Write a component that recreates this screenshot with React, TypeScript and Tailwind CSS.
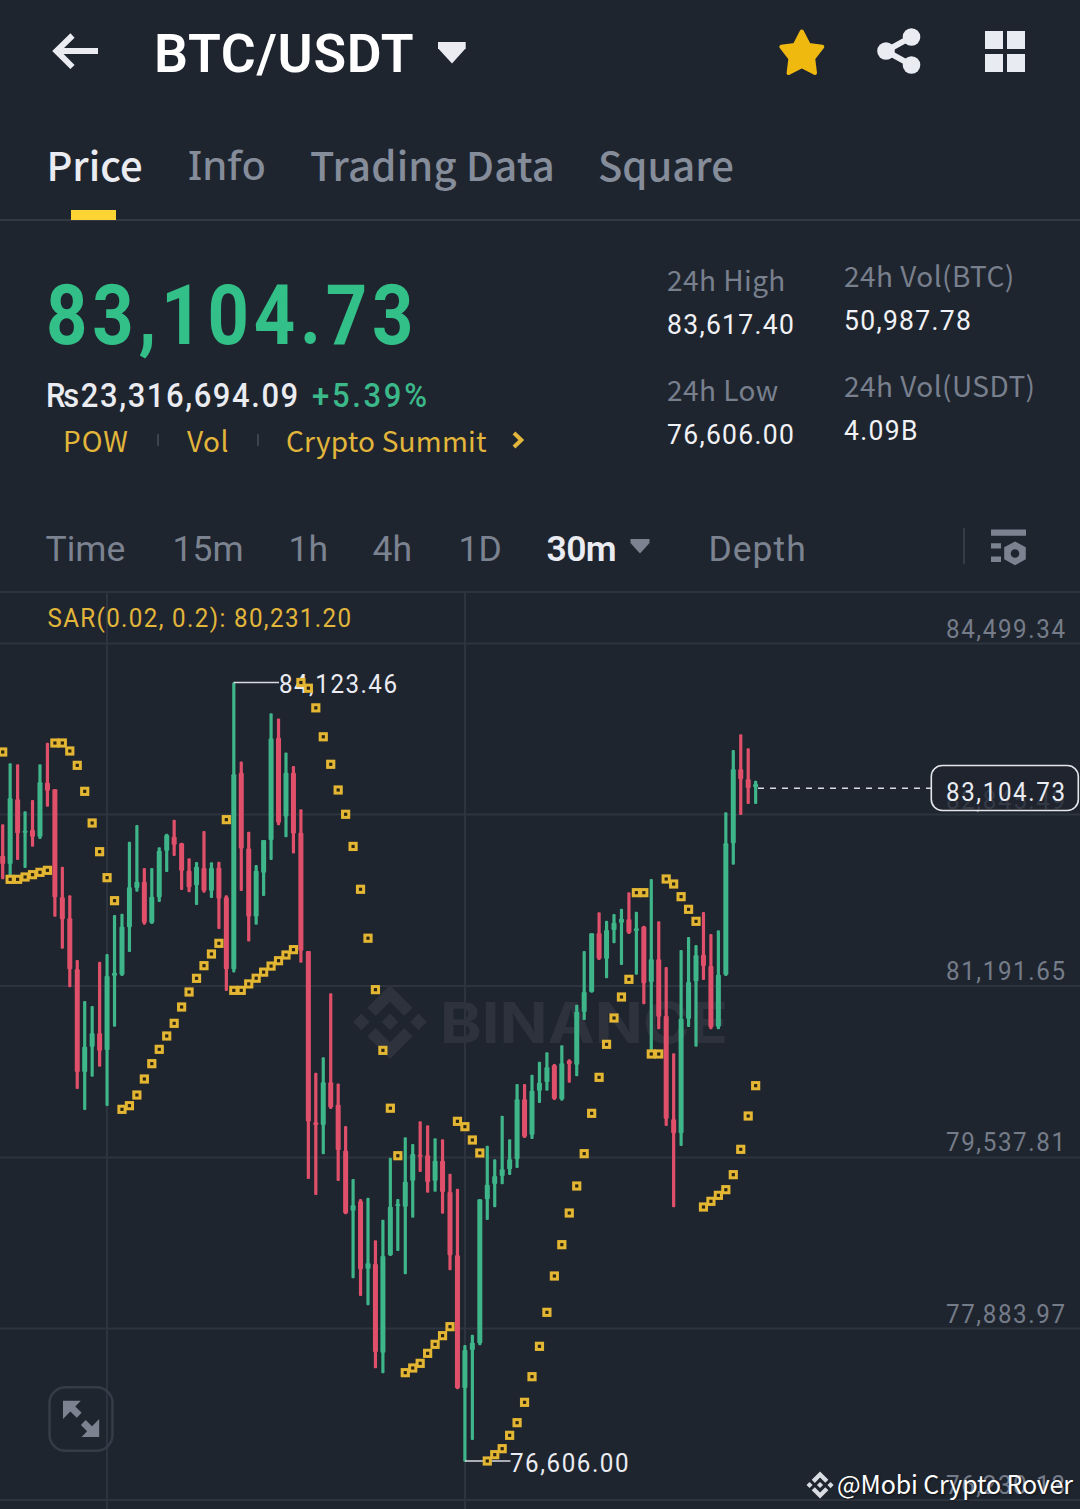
import type { ReactNode } from "react";

type Dir = "u" | "d";
// direction, high, body top, body bottom, low
type Candle = [Dir, number, number, number, number];

interface Segment<T> {
  origin: number;
  unit: number;
  start: number;
  rows: T[];
}

const CANDLES: Segment<Candle>[] = [
  {
    origin: 660,
    unit: 3,
    start: 0,
    rows: [
      ["d", 493, 587, 612, 658],
      ["u", 310, 415, 612, 650],
      ["d", 313, 418, 520, 600],
      ["u", 454, 512, 518, 624],
      ["d", 420, 510, 530, 560],
      ["u", 313, 367, 530, 537],
      ["d", 248, 368, 392, 440],
      ["d", 388, 388, 712, 770],
      ["d", 620, 712, 778, 866],
      ["d", 706, 775, 928, 982],
      ["d", 900, 928, 1236, 1287],
      ["u", 1023, 1160, 1236, 1350],
      ["u", 1038, 1120, 1160, 1250],
      ["d", 905, 1120, 1172, 1220],
      ["u", 882, 948, 1170, 1338],
      ["u", 765, 938, 947, 1100],
      ["u", 761, 800, 944, 948],
      ["u", 545, 682, 802, 876],
      ["u", 495, 665, 684, 695],
      ["d", 624, 665, 788, 794],
      ["u", 624, 710, 788, 792],
      ["u", 562, 572, 712, 726],
      ["u", 521, 525, 572, 636],
      ["d", 479, 530, 554, 588],
      ["d", 548, 550, 632, 690],
      ["d", 595, 632, 682, 697],
      ["u", 606, 620, 676, 735],
      ["d", 513, 624, 692, 698],
      ["u", 607, 624, 692, 714],
    ],
  },
  {
    origin: 660,
    unit: 2.8,
    start: 29,
    rows: [
      ["d", 565, 582, 668, 753],
      ["d", 659, 664, 866, 927],
      ["u", 63, 320, 866, 875],
      ["d", 284, 316, 528, 647],
      ["d", 481, 528, 718, 788],
      ["u", 574, 590, 718, 741],
      ["u", 504, 504, 596, 661],
      ["u", 149, 220, 504, 560],
      ["d", 164, 218, 455, 463],
      ["u", 259, 316, 438, 496],
      ["d", 297, 316, 486, 542],
      ["d", 418, 484, 814, 848],
      ["d", 815, 815, 1292, 1453],
      ["d", 1156, 1294, 1302, 1498],
      ["u", 1112, 1182, 1302, 1384],
      ["d", 933, 1182, 1252, 1257],
      ["d", 1186, 1245, 1372, 1459],
    ],
  },
  {
    origin: 960,
    unit: 3,
    start: 46,
    rows: [
      ["d", 498, 572, 760, 763],
      ["u", 657, 736, 752, 955],
      ["d", 717, 724, 928, 1008],
      ["u", 713, 910, 926, 1036],
      ["d", 841, 912, 1176, 1225],
      ["u", 779, 888, 1178, 1240],
      ["u", 593, 740, 886, 888],
      ["u", 717, 732, 738, 873],
      ["u", 532, 665, 740, 943],
      ["u", 552, 582, 662, 773],
      ["d", 484, 584, 590, 636],
      ["d", 496, 586, 666, 698],
      ["u", 535, 602, 662, 695],
      ["d", 538, 602, 696, 761],
      ["d", 641, 696, 886, 931],
      ["d", 686, 886, 1285, 1288],
      ["u", 1155, 1170, 1284, 1505],
      ["u", 1124, 1148, 1170, 1440],
      ["u", 718, 718, 1150, 1156],
      ["u", 557, 674, 718, 780],
      ["u", 598, 648, 672, 742],
      ["u", 467, 628, 648, 673],
      ["u", 538, 598, 628, 645],
      ["u", 372, 418, 598, 624],
      ["d", 372, 418, 530, 534],
      ["u", 344, 392, 524, 537],
      ["u", 305, 368, 392, 429],
    ],
  },
  {
    origin: 860,
    unit: 3,
    start: 73,
    rows: [
      ["u", 577, 622, 666, 692],
      ["d", 612, 616, 716, 720],
      ["u", 556, 610, 718, 722],
      ["d", 598, 602, 612, 668],
      ["u", 434, 455, 614, 649],
      ["u", 273, 396, 456, 480],
      ["u", 220, 220, 396, 398],
      ["d", 157, 220, 296, 300],
      ["u", 182, 210, 296, 355],
      ["u", 162, 188, 210, 250],
      ["u", 146, 176, 188, 315],
      ["d", 97, 178, 218, 222],
      ["u", 155, 205, 213, 344],
      ["d", 197, 200, 370, 433],
      ["u", 57, 298, 366, 572],
      ["d", 184, 298, 470, 508],
      ["d", 321, 468, 776, 798],
      ["d", 580, 778, 820, 1042],
      ["u", 270, 476, 820, 858],
      ["u", 231, 366, 476, 501],
      ["u", 255, 286, 364, 560],
      ["d", 156, 284, 318, 360],
      ["d", 222, 318, 502, 508],
      ["u", 211, 344, 500, 508],
      ["u", -143, -50, 344, 348],
    ],
  },
  {
    origin: 700,
    unit: 3,
    start: 98,
    rows: [
      ["u", 150, 208, 430, 494],
      ["d", 103, 208, 238, 345],
      ["d", 145, 238, 264, 312],
      ["u", 242, 252, 262, 312],
    ],
  },
];

const SAR: Segment<number>[] = [
  {
    origin: 660,
    unit: 3,
    start: 0,
    rows: [
      276, 658, 658, 651, 644, 637, 631, 249, 249, 273, 316, 394, 489, 575, 653, 722, 1348, 1337,
      1305, 1257, 1211, 1168, 1128, 1090, 1041, 996, 955, 917, 882, 850,
    ],
  },
  {
    origin: 660,
    unit: 2.8,
    start: 30,
    rows: [
      447, 925, 925, 907, 891, 874, 857, 842, 826, 811, 63, 79, 134, 215, 292, 364, 432, 522, 642,
      779, 923, 1093, 1255, 1388,
    ],
  },
  {
    origin: 960,
    unit: 3,
    start: 54,
    rows: [
      1238, 1224, 1210, 1180, 1153, 1127, 1100, 484, 500, 540, 579, 1503, 1484, 1466, 1426, 1388,
      1327, 1250, 1159, 1057, 948, 854,
    ],
  },
  {
    origin: 860,
    unit: 3,
    start: 76,
    rows: [
      1059, 978, 881, 760, 652, 553, 474, 411, 358, 98, 98, 582, 582, 57, 72, 110, 148, 184, 1041,
      1024, 1006, 989, 944, 868, 768, 677,
    ],
  },
];

const slotX = (i: number) => 2.7 + i * 7.455;

const LOGO =
  "M16.624 13.9202l2.7175 2.7154-7.353 7.353-7.353-7.352 2.7175-2.7164 4.6355 4.6595 4.6356-4.6595zm4.6366-4.6366L24 12l-2.7154 2.7164L18.5682 12l2.6924-2.7164zm-9.272.001l2.7163 2.6914-2.7164 2.7174v-.001L9.2721 12l2.7164-2.7154zm-9.2722-.001L5.4088 12l-2.6914 2.6924L0 12l2.7164-2.7164zM11.9885.0115l7.353 7.329-2.7174 2.7154-4.6356-4.6356-4.6355 4.6595-2.7174-2.7154 7.353-7.353z";

function Header() {
  return (
    <header className="flex h-[106px] items-center pl-[50px] pr-[55px] text-[#eaecf2]">
      <svg className="mb-1 h-10 w-[50px] shrink-0" viewBox="50 31 50 40" fill="none" stroke="currentColor" strokeWidth="6">
        <path d="M98 51H57M72.5 35.5 56.5 51l16 16" />
      </svg>
      <h1 className="ml-[54px] w-[261px] whitespace-nowrap pt-0.5 text-[53.5px] font-semibold leading-[60px] tracking-[0.7px] text-white">
        BTC/USDT
      </h1>
      <svg className="ml-[22px] h-[23px] w-[30px] shrink-0" viewBox="437 41.5 30 23" fill="currentColor">
        <path d="M438 41.5h27.7v6.3L452 63 438 47.8z" />
      </svg>
      <svg className="mb-1 ml-auto h-[50px] w-[50px]" viewBox="778 26 50 50">
        <path
          d="M802.8 31.5 809.8 45 823.3 46.8 814.2 58.5 816 73 802.8 66.3 789.6 73 791.4 58.5 782.3 46.8 795.8 45Z"
          fill="#f0b90f"
          stroke="#f0b90f"
          strokeWidth="4"
          strokeLinejoin="round"
        />
      </svg>
      <svg className="mb-1 ml-[48px] h-[50px] w-[48px]" viewBox="875 26 48 50" fill="currentColor">
        <path d="M911.3 37 886 51l25.3 14" fill="none" stroke="currentColor" strokeWidth="6" />
        <circle cx="886" cy="51" r="8.8" />
        <circle cx="911.5" cy="37" r="8.8" />
        <circle cx="911.5" cy="65" r="8.8" />
      </svg>
      <div className="mb-[3px] ml-[62px] grid grid-cols-[18px_18px] grid-rows-[18px_18px] gap-[4.5px]">
        <i className="bg-[#e8ebf1]" />
        <i className="bg-[#e8ebf1]" />
        <i className="bg-[#e8ebf1]" />
        <i className="bg-[#e8ebf1]" />
      </div>
    </header>
  );
}

function Tabs() {
  return (
    <nav className="grid h-[115px] grid-cols-[143px_122px_288px_1fr] border-b-2 border-[#323844] pl-[45px] pt-[38px] font-['Noto_Sans_CJK_SC',sans-serif] text-[40px] font-medium leading-[40px] text-[#858c9a]">
      <div className="flex w-[97px] flex-col items-center gap-[26px] text-[#eaecf2]">
        <span className="h-10 pl-0.5">Price</span>
        <span className="-mb-1 h-[10px] w-[45px] shrink-0 bg-[#fcd535]" />
      </div>
      <span className="pt-px font-['Noto_Sans',sans-serif]">Info</span>
      <span className="tracking-[0.2px]">Trading Data</span>
      <span>Square</span>
    </nav>
  );
}

function Stat({ label, value }: { label: string; value: string }) {
  return (
    <div className="flex h-[110px] flex-col gap-[15px] whitespace-nowrap">
      <span className="font-['Noto_Sans_CJK_SC',sans-serif] text-[28px] leading-[30px] tracking-[0.45px] text-[#787f8d]">
        {label}
      </span>
      <span className="origin-left scale-x-[0.93] pt-px text-[28.5px] leading-[30px] tracking-[1.4px] text-[#f0f2f6]">
        {value}
      </span>
    </div>
  );
}

function Summary() {
  return (
    <section className="flex h-[284px] pl-[46px]">
      <div className="w-[621px] pt-[51px]">
        <div className="w-[420px] origin-left scale-x-[0.86] pt-0.5 text-[84px] font-bold leading-[84px] tracking-[5.6px] text-[#32bf88]">
          83,104.73
        </div>
        <div className="mt-[17px] flex h-10 whitespace-nowrap text-[34px] font-medium leading-[40px]">
          <div className="w-[266px] text-[#eaecf2]">
            <span className="inline-block origin-left scale-x-[0.91] tracking-[1.75px]">₨23,316,694.09</span>
          </div>
          <span className="inline-block origin-left scale-x-[0.91] tracking-[3px] text-[#3bb98a]">+5.39%</span>
        </div>
        <div className="mt-[5px] flex h-10 items-center font-['Noto_Sans_CJK_SC',sans-serif] text-[28px] leading-[40px] text-[#e2b63a]">
          <span className="ml-[17px] w-[94px] tracking-[1px]">POW</span>
          <i className="h-3 w-[2px] bg-[#3c434f]" />
          <span className="ml-[28px] w-[70px] tracking-[0.5px]">Vol</span>
          <i className="h-3 w-[2px] bg-[#3c434f]" />
          <span className="ml-[27px] w-[225px] tracking-[0.2px]">Crypto Summit</span>
          <svg className="h-5 w-[14px]" viewBox="511 431 14 20" fill="none" stroke="currentColor" strokeWidth="4">
            <path d="M514 434 521.3 441 514 448" />
          </svg>
        </div>
      </div>
      <div className="w-[177px] pt-[43px]">
        <Stat label="24h High" value="83,617.40" />
        <Stat label="24h Low" value="76,606.00" />
      </div>
      <div className="pt-[39px]">
        <Stat label="24h Vol(BTC)" value="50,987.78" />
        <Stat label="24h Vol(USDT)" value="4.09B" />
      </div>
    </section>
  );
}

function Intervals() {
  return (
    <nav className="flex h-[88px] items-center border-b-2 border-[#2d3440] pl-[45.5px] pt-px text-[35.5px] leading-[40px] text-[#7b8290]">
      <span className="w-[127px]">Time</span>
      <span className="w-[116px]">15m</span>
      <span className="w-[84px]">1h</span>
      <span className="w-[86px]">4h</span>
      <span className="w-[88px]">1D</span>
      <span className="w-[83px] font-semibold tracking-[-0.6px] text-[#eaecf2]">30m</span>
      <svg className="mb-1 h-[15px] w-5" viewBox="0 0 20 15" fill="currentColor">
        <path d="M.5 0h19v4L10 14.5.5 4z" />
      </svg>
      <span className="ml-[59px] w-[254.5px] tracking-[1px]">Depth</span>
      <i className="mb-[5px] h-9 w-[2px] bg-[#353c48]" />
      <svg className="mb-[3px] ml-[25px] h-[38px] w-[38px]" viewBox="990 528 38 38" fill="currentColor">
        <path d="M991 529.5h35v6.3h-35zM991 543.2h10v5.3h-10zM991 556.5h10v5.5h-10z" />
        <path
          fillRule="evenodd"
          d="M1015 541.5l10.8 5.8v12L1015 565.2l-10.8-5.9v-12zM1015 549.2a4.3 4.3 0 1 0 0 8.6 4.3 4.3 0 0 0 0-8.6z"
        />
      </svg>
    </nav>
  );
}

interface LabelProps {
  x: number;
  y: number;
  width: number;
  fill: string;
  children: ReactNode;
}

function Label({ x, y, width, fill, children }: LabelProps) {
  return (
    <text transform={`translate(${x} ${y}) scale(0.93 1)`} textLength={width / 0.93} fill={fill}>
      {children}
    </text>
  );
}

const TICKS: [number, string][] = [
  [629, "84,499.34"],
  [800, "82,845.49"],
  [971, "81,191.65"],
  [1142, "79,537.81"],
  [1314, "77,883.97"],
  [1485, "76,230.13"],
];

function Chart() {
  return (
    <svg className="block h-[916px] w-[1080px]" viewBox="0 593 1080 916" fontFamily="Roboto, sans-serif" fontSize="26">
      <g stroke="#2e343f" strokeWidth="2">
        {[643.5, 814.5, 986, 1157.5, 1328.5, 1500].map((y) => (
          <path key={y} d={`M0 ${y}H1080`} />
        ))}
        <path d="M107 593V1509M465 593V1509" />
      </g>

      <g fill="#2d323d">
        <path d={LOGO} transform="translate(353 985) scale(3.083)" />
        <text
          x="440"
          y="1042.5"
          fontFamily="Inter, sans-serif"
          fontSize="56"
          fontWeight="700"
          textLength="288"
          lengthAdjust="spacingAndGlyphs"
        >
          BINANCE
        </text>
      </g>

      <Label x={47.5} y={627.3} width={303.5} fill="#e2b63a">
        SAR(0.02, 0.2): 80,231.20
      </Label>

      {TICKS.map(([y, text]) => (
        <Label key={text} x={946} y={y + 9.2} width={119} fill="#757c89">
          {text}
        </Label>
      ))}

      {CANDLES.flatMap(({ origin, unit, start, rows }) =>
        rows.map(([dir, high, top, bottom, low], n) => {
          const x = slotX(start + n);
          const y = (v: number) => origin + v / unit;
          return (
            <g key={start + n} fill={dir === "u" ? "#3fb58a" : "#e1506a"}>
              <rect x={x - 1.6} y={y(high)} width="3.2" height={y(low) - y(high)} rx="1" />
              <rect x={x - 2.5} y={y(top)} width="5" height={y(bottom) - y(top)} rx="1" />
            </g>
          );
        }),
      )}

      <g stroke="#d8dbe1" strokeWidth="1.6">
        <path d="M233.5 682.5H279M465 1461H510.5" />
        <path d="M758 788.3H931" strokeDasharray="6 6" />
      </g>
      <Label x={279} y={693} width={118} fill="#eaecf2">
        84,123.46
      </Label>
      <Label x={510} y={1472} width={118.5} fill="#eaecf2">
        76,606.00
      </Label>

      <g fill="#2b2412" stroke="#e3b633" strokeWidth="3">
        {SAR.flatMap(({ origin, unit, start, rows }) =>
          rows.map((v, n) => (
            <rect key={start + n} x={slotX(start + n) - 3.1} y={origin + v / unit - 3.1} width="6.2" height="6.2" />
          )),
        )}
      </g>

      <rect
        x="931.3"
        y="765.5"
        width="147"
        height="45"
        rx="11"
        fill="#1f252f"
        fillOpacity="0.76"
        stroke="#e4e6ec"
        strokeWidth="1.6"
      />
      <Label x={946} y={801} width={119} fill="#eaecf2">
        83,104.73
      </Label>

      <rect x="49.5" y="1387.3" width="63" height="63.5" rx="16" fill="none" stroke="#353c48" strokeWidth="2.5" />
      <g fill="#7c8290">
        <path d="M63 1400.8h17.8l-5.5 5.7 6.3 6.2-4.8 5-6.4-6.3-7.4 7.5z" />
        <path d="M99.2 1437H81.5l5.6-5.7-6.2-6.3 4.8-5 6.3 6.3 7.2-7.2z" />
      </g>

      <path d={LOGO} transform="translate(806.5 1471.5) scale(1.13)" fill="#d9dce2" />
      <text
        x="837"
        y="1494"
        fontFamily="'Noto Sans CJK SC', sans-serif"
        fontSize="25"
        textLength="236"
        fill="#ffffff"
        className="[text-shadow:1px_1px_2px_rgba(0,0,0,0.5)]"
      >
        @Mobi Crypto Rover
      </text>
    </svg>
  );
}

export default function App() {
  return (
    <main className="h-[1509px] w-[1080px] overflow-hidden bg-[#1f252f] font-[Roboto,sans-serif]">
      <Header />
      <Tabs />
      <Summary />
      <Intervals />
      <Chart />
    </main>
  );
}
